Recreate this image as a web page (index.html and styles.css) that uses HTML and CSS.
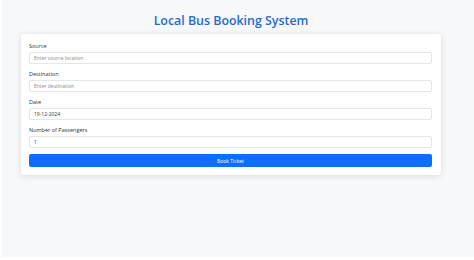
FILE: index.html
```html
<!DOCTYPE html>
<html lang="en">
<head>
<meta charset="utf-8">
<title>Local Bus Booking System</title>
<link rel="stylesheet" href="styles.css">
</head>
<body>
<div class="page">
  <h1 class="title">Local Bus Booking System</h1>
  <form class="card">
    <div class="group">
      <label class="label">Source</label>
      <input class="field" type="text" placeholder="Enter source location">
    </div>
    <div class="group">
      <label class="label">Destination</label>
      <input class="field" type="text" placeholder="Enter destination">
    </div>
    <div class="group">
      <label class="label">Date</label>
      <input class="field" type="text" value="19-12-2024">
    </div>
    <div class="group">
      <label class="label">Number of Passengers</label>
      <input class="field" type="text" value="1">
    </div>
    <button class="btn" type="button">Book Ticket</button>
  </form>
</div>
</body>
</html>
```
FILE: styles.css
```css
* { box-sizing: border-box; }
html, body { margin: 0; padding: 0; background: #ffffff; }
body { font-family: "Open Sans", "Noto Sans", sans-serif; color: #212529; }
.page {
  margin-left: 2px;
  height: 257px;
  background: #f7f8fa;
  padding-top: 13px;
}
.title {
  width: 458px;
  margin: 0 0 5px 0;
  text-align: center;
  font-size: 12.4px;
  line-height: 16px;
  font-weight: 600;
  color: #1f6ccc;
}
.card {
  margin-left: 19px;
  width: 420px;
  background: #fff;
  border-radius: 3px;
  box-shadow: 0 1px 6px rgba(0,0,0,0.13);
  padding: 8px 9px 8px 8px;
  display: flex;
  flex-direction: column;
}
.group { display: flex; flex-direction: column; margin-bottom: 6px; }
.label { font-size: 5.5px; line-height: 8px; margin-bottom: 2px; color: #333; }
.field {
  height: 12px;
  border: 1px solid #e3e6ea;
  border-radius: 2px;
  padding: 0 4px;
  font-family: inherit;
  font-size: 5px;
  color: #333;
  background: #fff;
  outline: none;
}
.field::placeholder { color: #888; }
.btn {
  height: 13px;
  border: none;
  border-radius: 2px;
  background: #0d6efd;
  color: #fff;
  font-family: inherit;
  font-size: 5px;
  padding: 0;
}
```
